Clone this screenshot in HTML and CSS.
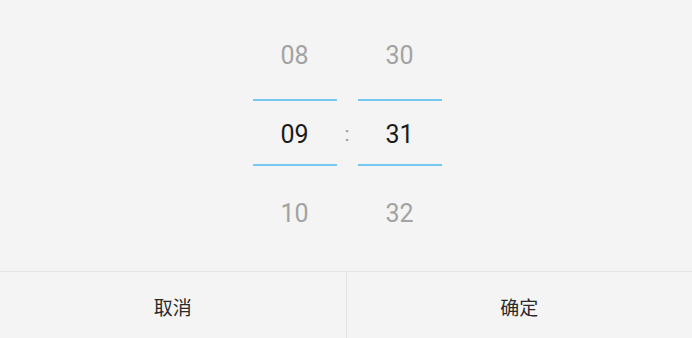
FILE: index.html
```html
<!DOCTYPE html>
<html lang="zh">
<head>
<meta charset="utf-8">
<title>时间选择</title>
<link rel="stylesheet" href="styles.css">
</head>
<body>
<div class="dialog">
  <div class="picker">
    <div class="column">
      <div class="item">08</div>
      <div class="item selected">09</div>
      <div class="item">10</div>
    </div>
    <div class="colon">:</div>
    <div class="column">
      <div class="item">30</div>
      <div class="item selected">31</div>
      <div class="item">32</div>
    </div>
  </div>
  <div class="actions">
    <div class="btn">取消</div>
    <div class="btn">确定</div>
  </div>
</div>
</body>
</html>
```

FILE: styles.css
```css
html, body {
  margin: 0;
  padding: 0;
  background: #f4f4f4;
}
.dialog {
  width: 692px;
  height: 338px;
  display: flex;
  flex-direction: column;
  background: #f4f4f4;
}
.picker {
  height: 271px;
  box-sizing: border-box;
  padding-top: 16px;
  display: flex;
  justify-content: center;
  padding-left: 2px;
}
.column {
  width: 84px;
  display: flex;
  flex-direction: column;
}
.item {
  height: 79px;
  line-height: 79px;
  text-align: center;
  font-family: Roboto, "Noto Sans", sans-serif;
  font-size: 25px;
  color: #a3a3a3;
}
.item.selected {
  position: relative;
  color: #1c1c1c;
}
.item.selected::before,
.item.selected::after {
  content: "";
  position: absolute;
  left: 0;
  right: 0;
  height: 2px;
  background: #75c8ef;
}
.item.selected::before { top: 4px; }
.item.selected::after { top: 69px; }
.colon {
  width: 21px;
  margin-top: 79px;
  height: 79px;
  line-height: 79px;
  text-align: center;
  font-family: Roboto, sans-serif;
  font-size: 21px;
  color: #9c9c9c;
}
.actions {
  flex: 1;
  display: flex;
  border-top: 1px solid #e4e4e4;
}
.btn {
  flex: 1;
  display: flex;
  align-items: center;
  justify-content: center;
  padding-top: 3px;
  font-family: "Noto Sans CJK SC", sans-serif;
  font-size: 19px;
  color: #2a2a2a;
}
.btn + .btn {
  border-left: 1px solid #e4e4e4;
}
```
